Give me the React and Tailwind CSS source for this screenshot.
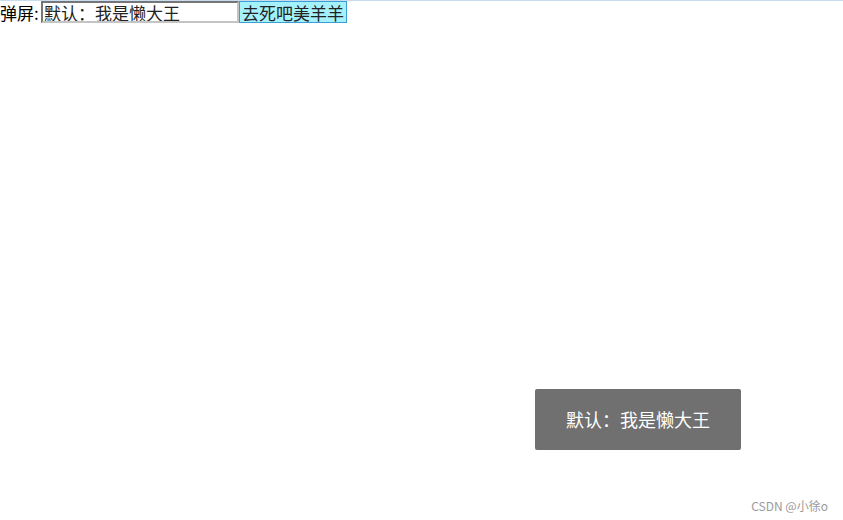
import React, { useState } from 'react';

const CJK = { fontFamily: '"Microsoft YaHei", "Noto Sans CJK SC", sans-serif' };

export default function App() {
    const [text, setText] = useState('默认：我是懒大王');

    return (
        <div className="relative w-[843px] h-[520px] bg-white overflow-hidden border-t border-[#c9dcef]" style={CJK}>
            {/* Danmaku input bar */}
            <div className="flex items-center h-[22px] text-[17px] leading-none text-black">
                <span className="w-[41px] whitespace-nowrap">弹屏:</span>
                <input
                    value={text}
                    onChange={e => setText(e.target.value)}
                    className="w-[198px] h-[22px] px-[1px] border-2 border-t-[#767676] border-l-[#767676] border-b-[#c4c4c4] border-r-[#c4c4c4] text-[17px] text-[#222] outline-none"
                    style={CJK}
                />
                <button className="h-[22px] w-[108px] px-0 bg-[#a4f1fb] border border-[#3b9fd6] text-[17px] leading-none text-[#222] whitespace-nowrap">
                    去死吧美羊羊
                </button>
            </div>

            {/* Toast */}
            <div className="absolute left-[535px] top-[388px] w-[206px] h-[61px] rounded-[2px] bg-[#707070] flex items-center justify-center text-white text-[18px]">
                {text}
            </div>

            {/* Watermark */}
            <div className="absolute right-[15px] top-[496px] text-[12px] text-[#9a9a9a]">CSDN @小徐o</div>
        </div>
    );
}
